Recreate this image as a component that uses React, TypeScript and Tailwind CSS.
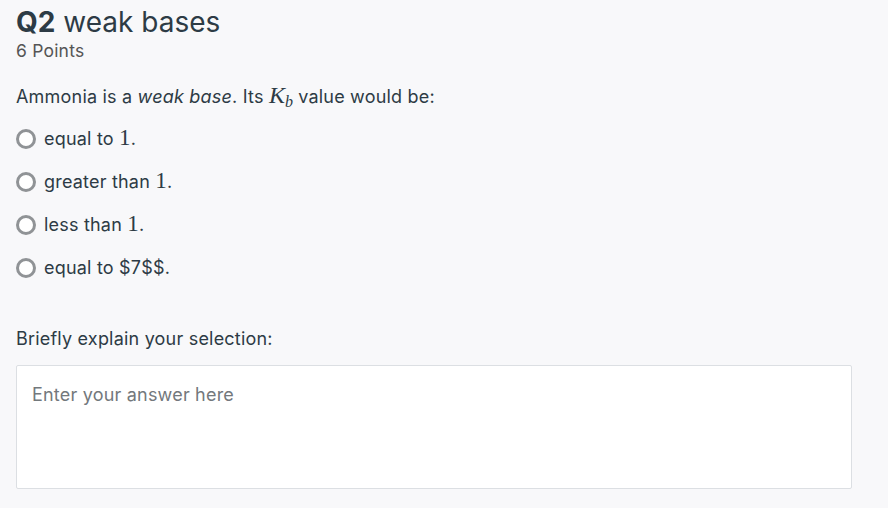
import React, { useState } from "react";

const options = [
    { id: "a", label: "equal to ", math: "1", tail: "." },
    { id: "b", label: "greater than ", math: "1", tail: "." },
    { id: "c", label: "less than ", math: "1", tail: "." },
    { id: "d", label: "equal to $7$$.", math: "", tail: "" },
];

const App: React.FC = () => {
    const [selected, setSelected] = useState<string>("");
    const [answer, setAnswer] = useState<string>("");

    return (
        <div
            className="min-h-screen w-full bg-[#f8f8fa] text-[#2d3b45] px-4 pt-[4px]"
            style={{ fontFamily: "Inter, 'Open Sans', sans-serif" }}
        >
            {/* Header */}
            <h1 className="text-[28px] leading-[36px]">
                <span className="font-bold">Q2</span> weak bases
            </h1>
            <p className="text-[17.5px] leading-[22px] text-[#555] tracking-[0.2px]">6 Points</p>

            {/* Question */}
            <p className="mt-[20px] text-[18px] leading-[26px] tracking-[0.2px]">
                Ammonia is a <em>weak base</em>. Its{" "}
                <span className="font-['Liberation_Serif',serif] text-[24px] italic tracking-normal">
                    K<sub className="text-[16px]">b</sub>
                </span>{" "}
                value would be:
            </p>

            <div className="mt-[7px] flex flex-col">
                {options.map((o) => (
                    <label key={o.id} className="flex items-center gap-[8px] h-[43px] cursor-pointer">
                        <input
                            type="radio"
                            name="q2"
                            checked={selected === o.id}
                            onChange={() => setSelected(o.id)}
                            className="sr-only"
                        />
                        <span className="w-[20px] h-[20px] rounded-full border-[3px] border-[#909396] bg-white flex items-center justify-center">
                            {selected === o.id && <span className="w-[8px] h-[8px] rounded-full bg-[#2d3b45]" />}
                        </span>
                        <span className="text-[18px] tracking-[0.2px]">
                            {o.label}
                            {o.math && (
                                <span className="font-['Liberation_Serif',serif] text-[23px]">{o.math}</span>
                            )}
                            {o.tail}
                        </span>
                    </label>
                ))}
            </div>

            {/* Explanation */}
            <p className="mt-[37px] text-[18px] leading-[26px] tracking-[0.2px]">Briefly explain your selection:</p>
            <textarea
                value={answer}
                onChange={(e) => setAnswer(e.target.value)}
                placeholder="Enter your answer here"
                className="mt-[13px] block w-[836px] h-[124px] bg-white border border-[#dcdfe3] rounded-[2px] px-[15px] py-[15px] text-[18px] tracking-[0.2px] placeholder:text-[#73787c] resize-none focus:outline-none"
            />
        </div>
    );
};

export default App;
